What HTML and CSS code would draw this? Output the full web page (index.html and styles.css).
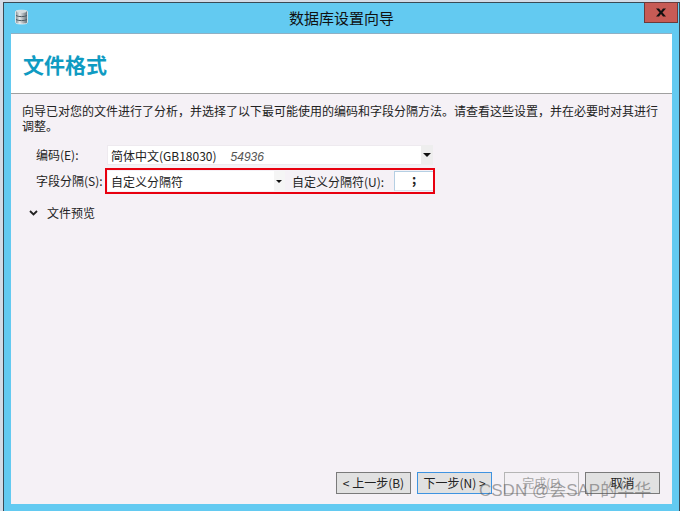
FILE: index.html
```html
<!DOCTYPE html>
<html lang="zh">
<head>
    <meta charset="UTF-8">
    <meta name="viewport" content="width=device-width, initial-scale=1.0">
    <title>数据库设置向导</title>
    <link rel="stylesheet" href="styles.css">
</head>
<body>
    <div class="window">
        <div class="titlebar">
            <svg class="app-icon" width="13" height="16" viewBox="0 0 13 16">
                <defs>
                    <linearGradient id="dbFill" x1="0" x2="1" y1="0" y2="0">
                        <stop offset="0" stop-color="#7f8c94"/>
                        <stop offset="0.35" stop-color="#e4e8ea"/>
                        <stop offset="1" stop-color="#5d6a72"/>
                    </linearGradient>
                </defs>
                <path d="M0.5 2.5C0.5 0.8 12.5 0.8 12.5 2.5V13.5C12.5 15.5 0.5 15.5 0.5 13.5Z" fill="url(#dbFill)" stroke="#f1f4f5" stroke-width="0.8"/>
                <ellipse cx="6.5" cy="2.6" rx="5" ry="1.4" fill="#d6dcdf"/>
                <path d="M1 6.5C3 8 10 8 12 6.5M1 10.5C3 12 10 12 12 10.5" fill="none" stroke="#4d5a62" stroke-width="1"/>
            </svg>
            <div class="title-text">数据库设置向导</div>
            <button class="close-btn">
                <svg width="12" height="9" viewBox="0 0 12 9"><path d="M1 0.5H4L6 3L8 0.5H11L7.5 4.5L11 8.5H8L6 6L4 8.5H1L4.5 4.5Z" fill="#111"/></svg>
            </button>
        </div>
        <div class="client">
            <div class="page-head">
                <h1>文件格式</h1>
            </div>
            <div class="page-body">
                <p class="intro">向导已对您的文件进行了分析，并选择了以下最可能使用的编码和字段分隔方法。请查看这些设置，并在必要时对其进行调整。</p>
                <div class="form-row">
                    <label class="field-label">编码(E):</label>
                    <div class="combo combo-encoding">
                        <span class="combo-text">简体中文(GB18030)<i class="codepage">54936</i></span>
                        <span class="combo-arrow"></span>
                    </div>
                </div>
                <div class="form-row">
                    <label class="field-label">字段分隔(S):</label>
                    <div class="highlight">
                        <div class="combo combo-sep">
                            <span class="combo-text">自定义分隔符</span>
                            <span class="combo-arrow small"></span>
                        </div>
                        <label class="custom-label">自定义分隔符(U):</label>
                        <div class="sep-input">;</div>
                    </div>
                </div>
                <div class="preview-toggle">
                    <svg width="9" height="6" viewBox="0 0 9 6"><path d="M1 1L4.5 4.5L8 1" fill="none" stroke="#222" stroke-width="1.8"/></svg>
                    <span>文件预览</span>
                </div>
                <div class="buttons">
                    <button class="btn">&lt; 上一步(B)</button>
                    <button class="btn btn-default">下一步(N) &gt;</button>
                    <button class="btn btn-disabled">完成(F)</button>
                    <button class="btn">取消</button>
                </div>
            </div>
        </div>
    </div>
    <div class="watermark">CSDN @会SAP的华华</div>
</body>
</html>
```

FILE: styles.css
```css
html, body {
    margin: 0;
    height: 511px;
    overflow: hidden;
}

body {
    background: #d4dbe6;
    padding: 2px 0 0 3px;
    box-sizing: border-box;
    position: relative;
    font-family: "Noto Sans CJK SC", "Liberation Sans", sans-serif;
    font-size: 12px;
    color: #222;
}

.window {
    width: 677px;
    height: 520px;
    box-sizing: border-box;
    background: #63caf1;
    border: 1px solid #3a4a55;
    padding: 0 7px 0 7px;
}

.titlebar {
    height: 30px;
    display: flex;
    align-items: center;
    position: relative;
}

.app-icon {
    margin-left: 4px;
    margin-top: -3px;
}

.title-text {
    position: absolute;
    left: 278px;
    top: 5px;
    font-size: 15px;
    line-height: 20px;
    color: #111;
}

.close-btn {
    position: absolute;
    right: -6px;
    top: -1px;
    width: 34px;
    height: 21px;
    padding: 0;
    background: #c75b55;
    border: 1px solid #6b3a3a;
    display: flex;
    align-items: center;
    justify-content: center;
}

.client {
    height: 471px;
    background: #f5f1f6;
    display: flex;
    flex-direction: column;
    border-top: 1px solid #8fb0c4;
    box-sizing: border-box;
}

.page-head {
    height: 59px;
    flex: none;
    background: #fff;
    border-bottom: 1px solid #a0a0a0;
    box-sizing: content-box;
    display: flex;
    align-items: center;
    padding-left: 12px;
}

.page-head h1 {
    margin: 0;
    font-size: 21px;
    line-height: 28px;
    font-weight: 700;
    color: #0f9bc2;
}

.page-body {
    flex: 1;
    display: flex;
    flex-direction: column;
    padding: 9px 12px 10px 11px;
}

.intro {
    margin: 0 0 12px;
    line-height: 15px;
    width: 640px;
}

.form-row {
    display: flex;
    align-items: center;
    padding-left: 14px;
    margin-bottom: 3px;
}

.field-label {
    width: 70px;
    flex: none;
    white-space: nowrap;
    line-height: 16px;
}

.combo {
    display: flex;
    align-items: center;
    justify-content: space-between;
    background: #fff;
    height: 20px;
    box-sizing: border-box;
}

.combo-encoding {
    width: 326px;
    margin-left: 1px;
    border: 1px solid #eeeaef;
    border-right: none;
}

.combo-text {
    padding-left: 3px;
    white-space: nowrap;
}

.codepage {
    margin-left: 14px;
    color: #555;
    font-family: "Liberation Sans", sans-serif;
    font-size: 12px;
}

.combo-arrow {
    width: 12px;
    height: 20px;
    background: #eeeeee;
    position: relative;
    flex: none;
}

.combo-arrow::after {
    content: "";
    position: absolute;
    left: 2px;
    top: 8px;
    border: 4px solid transparent;
    border-top: 4px solid #111;
    border-bottom: none;
}

.combo-arrow.small {
    background: #f5f5f5;
    width: 11px;
}

.combo-arrow.small::after {
    left: 2px;
    top: 9px;
    border-width: 3px;
    border-bottom: none;
}

.highlight {
    width: 330px;
    height: 26px;
    box-sizing: border-box;
    border: 2px solid #e8000f;
    display: flex;
    align-items: center;
    margin-left: -1px;
    padding-left: 1px;
}

.combo-sep {
    width: 177px;
    flex: none;
}

.custom-label {
    margin-left: 7px;
    width: 102px;
    flex: none;
    white-space: nowrap;
}

.sep-input {
    width: 39px;
    height: 20px;
    box-sizing: border-box;
    background: #fff;
    border: 1px solid #b5cfe3;
    border-right: none;
    border-bottom-color: #d8e4ee;
    text-align: center;
    font-weight: 700;
    font-size: 13px;
    line-height: 13px;
}

.preview-toggle {
    display: flex;
    align-items: center;
    gap: 9px;
    margin-top: 7px;
    padding-left: 7px;
    line-height: 18px;
}

.buttons {
    margin-top: auto;
    display: flex;
    justify-content: flex-end;
    gap: 6px;
    padding-right: 0;
}

.btn {
    width: 75px;
    height: 22px;
    padding: 0;
    box-sizing: border-box;
    font-family: inherit;
    font-size: 12px;
    line-height: 18px;
    color: #222;
    background: #e1e1e1;
    border: 1px solid #7a7a7a;
}

.btn-default {
    border-color: #3f93e0;
    margin-right: 6px;
}

.btn-disabled {
    background: #f3f0f4;
    border-color: #b5b5b5;
    color: #a3a3a3;
}

.watermark {
    position: absolute;
    left: 479px;
    top: 480px;
    font-size: 17px;
    line-height: 22px;
    white-space: nowrap;
    color: rgba(90, 90, 90, 0.55);
    font-family: "Liberation Sans", "Noto Sans CJK SC", sans-serif;
}
```
